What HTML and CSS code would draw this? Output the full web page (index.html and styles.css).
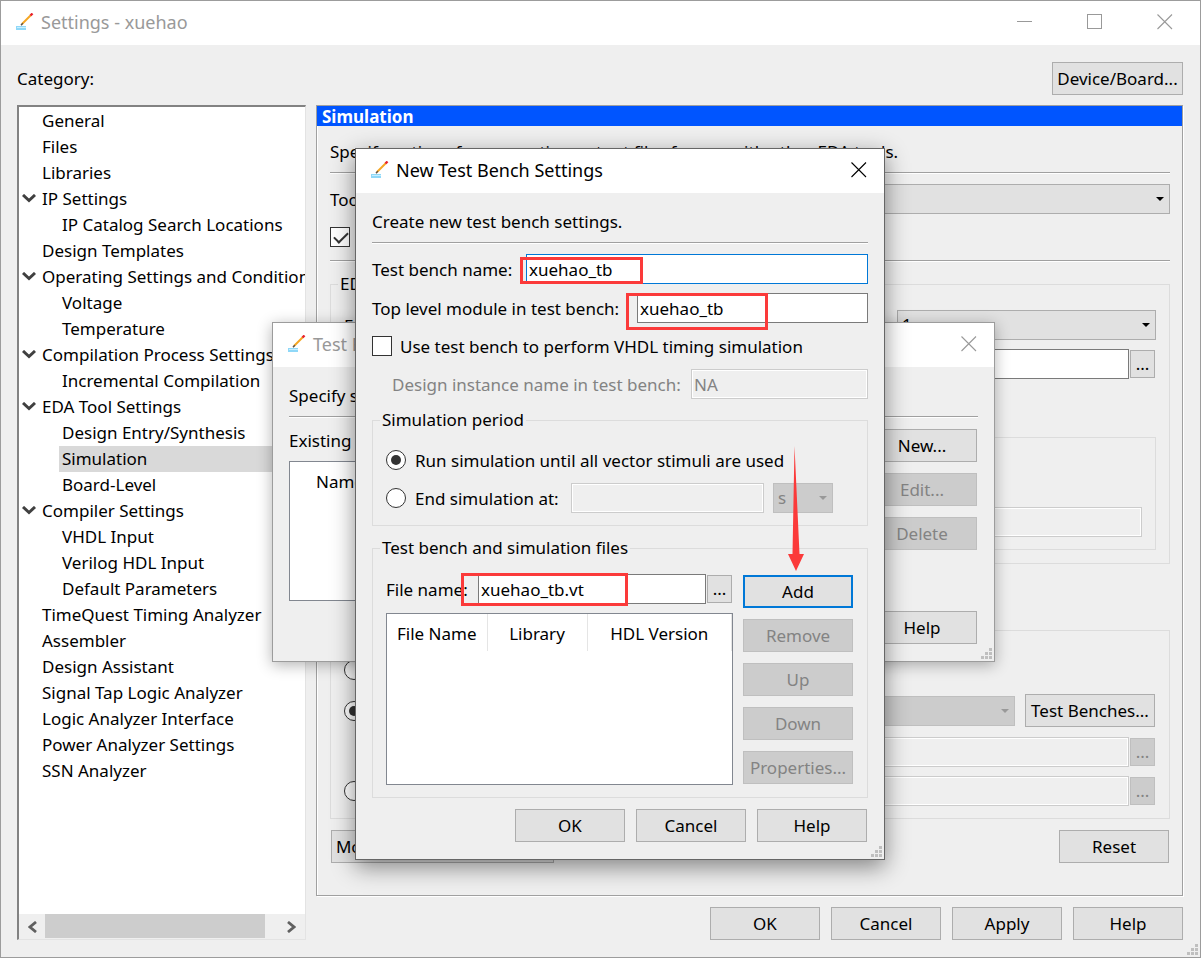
FILE: index.html
```html
<!DOCTYPE html>
<html lang="en">
<head>
  <meta charset="UTF-8" />
  <meta name="viewport" content="width=device-width, initial-scale=1.0"/>
  <title>Settings - xuehao</title>
  <link rel="stylesheet" href="styles.css">
</head>
<body>
  <!-- shared icons -->
  <svg class="icon-defs" aria-hidden="true">
    <symbol id="icon-app" viewBox="0 0 18 18">
      <rect x="0" y="13" width="10" height="4" fill="#8fd8f8"/>
      <rect x="1" y="14" width="9" height="1" fill="#c9efff"/>
      <path d="M6 11L15 2" stroke="#f5a623" stroke-width="2"/>
      <path d="M14.500 2.500L16.500 0.500" stroke="#e8222e" stroke-width="2.400"/>
      <path d="M5 12.200L6.800 10.200" stroke="#5a5248" stroke-width="1.500"/>
    </symbol>
    <symbol id="icon-close" viewBox="0 0 16 16">
      <path d="M0.500 0.500L15 15M15 0.500L0.500 15" stroke="currentColor" stroke-width="1.100" fill="none"/>
    </symbol>
    <symbol id="icon-grip" viewBox="0 0 11 11">
      <path d="M8 0h3v3h-3zM8 4h3v3h-3zM8 8h3v3h-3zM4 4h3v3h-3zM4 8h3v3h-3zM0 8h3v3h-3z" fill="#bfbfbf"/>
    </symbol>
    <symbol id="icon-chevron" viewBox="0 0 14 9">
      <path d="M1 1L7 6.500L13 1" stroke="#404040" stroke-width="3" fill="none"/>
    </symbol>
    <symbol id="icon-scroll" viewBox="0 0 9 12">
      <path d="M8 1L2 6L8 11" stroke="#606060" stroke-width="2.800" fill="none"/>
    </symbol>
  </svg>

  <div class="window main-window">
    <header class="titlebar">
      <svg class="app-icon"><use href="#icon-app"/></svg>
      <span class="title">Settings - xuehao</span>
      <button class="title-btn" aria-label="Minimize"><svg viewBox="0 0 16 16"><path d="M0 7.500H15" stroke="currentColor"/></svg></button>
      <button class="title-btn" aria-label="Maximize"><svg viewBox="0 0 16 16"><rect x="0.500" y="0.500" width="14" height="14" stroke="currentColor" fill="none"/></svg></button>
      <button class="title-btn" aria-label="Close"><svg><use href="#icon-close"/></svg></button>
    </header>

    <div class="top-row">
      <span>Category:</span>
      <button class="btn wide">Device/Board...</button>
    </div>

    <div class="settings">
      <div class="tree-box">
        <ul class="tree">
          <li><span>General</span></li>
          <li><span>Files</span></li>
          <li><span>Libraries</span></li>
          <li><svg class="chevron"><use href="#icon-chevron"/></svg><span>IP Settings</span>
            <ul>
              <li><span>IP Catalog Search Locations</span></li>
            </ul>
          </li>
          <li><span>Design Templates</span></li>
          <li><svg class="chevron"><use href="#icon-chevron"/></svg><span>Operating Settings and Conditions</span>
            <ul>
              <li><span>Voltage</span></li>
              <li><span>Temperature</span></li>
            </ul>
          </li>
          <li><svg class="chevron"><use href="#icon-chevron"/></svg><span>Compilation Process Settings</span>
            <ul>
              <li><span>Incremental Compilation</span></li>
            </ul>
          </li>
          <li><svg class="chevron"><use href="#icon-chevron"/></svg><span>EDA Tool Settings</span>
            <ul>
              <li><span>Design Entry/Synthesis</span></li>
              <li><span class="selected">Simulation</span></li>
              <li><span>Board-Level</span></li>
            </ul>
          </li>
          <li><svg class="chevron"><use href="#icon-chevron"/></svg><span>Compiler Settings</span>
            <ul>
              <li><span>VHDL Input</span></li>
              <li><span>Verilog HDL Input</span></li>
              <li><span>Default Parameters</span></li>
            </ul>
          </li>
          <li><span>TimeQuest Timing Analyzer</span></li>
          <li><span>Assembler</span></li>
          <li><span>Design Assistant</span></li>
          <li><span>Signal Tap Logic Analyzer</span></li>
          <li><span>Logic Analyzer Interface</span></li>
          <li><span>Power Analyzer Settings</span></li>
          <li><span>SSN Analyzer</span></li>
        </ul>
        <div class="scrollbar">
          <button aria-label="Scroll left"><svg><use href="#icon-scroll"/></svg></button>
          <div class="track"><div class="thumb"></div></div>
          <button class="flip" aria-label="Scroll right"><svg><use href="#icon-scroll"/></svg></button>
        </div>
      </div>

      <div class="page-col">
        <div class="panel">
          <h1>Simulation</h1>
          <div class="panel-body">
            <p>Specify options for generating output files for use with other EDA tools.</p>
            <hr>
            <div class="row tool-row">
              <label for="tool">Tool name:</label>
              <div class="combo"><select id="tool"><option></option></select></div>
            </div>
            <div class="check-row"><input type="checkbox" aria-label="Run simulation after compilation" checked></div>
            <hr class="low">
            <fieldset class="writer">
              <legend>EDA Netlist Writer settings</legend>
              <div class="row format-row">
                <label for="scale">Format:</label>
                <div class="combo"><select id="scale"><option>1 ps</option></select></div>
              </div>
              <div class="row path-row">
                <input type="text" aria-label="Output directory">
                <button class="btn browse">...</button>
              </div>
              <fieldset class="power">
                <input type="text" aria-label="Design instance name" disabled>
              </fieldset>
            </fieldset>
            <fieldset class="native">
              <div class="radio-row"><input type="radio" name="native" aria-label="None"></div>
              <div class="row compile-row">
                <div class="radio-row"><input type="radio" name="native" aria-label="Compile test bench" checked></div>
                <div class="combo disabled"><select disabled aria-label="Test bench"><option></option></select></div>
                <button class="btn">Test Benches...</button>
              </div>
              <div class="row path-row">
                <input type="text" aria-label="Simulation script" disabled>
                <button class="btn browse" disabled>...</button>
              </div>
              <div class="row path-row">
                <div class="radio-row"><input type="radio" name="native" aria-label="Script to compile test bench"></div>
                <input type="text" aria-label="Compile script" disabled>
                <button class="btn browse" disabled>...</button>
              </div>
            </fieldset>
            <div class="button-row split">
              <button class="btn more">More NativeLink Settings...</button>
              <button class="btn">Reset</button>
            </div>
          </div>
        </div>
        <div class="button-row">
          <button class="btn">OK</button>
          <button class="btn">Cancel</button>
          <button class="btn">Apply</button>
          <button class="btn">Help</button>
        </div>
      </div>
    </div>
    <svg class="grip"><use href="#icon-grip"/></svg>
  </div>

  <!-- Test Benches -->
  <div class="window dialog benches">
    <header class="titlebar">
      <svg class="app-icon"><use href="#icon-app"/></svg>
      <span class="title">Test Benches</span>
      <button class="title-btn" aria-label="Close"><svg><use href="#icon-close"/></svg></button>
    </header>
    <div class="dialog-body">
      <p>Specify settings for each test bench.</p>
      <hr>
      <div class="bench-list">
        <div class="list-col">
          <p>Existing test bench settings:</p>
          <div class="table-box">
            <table>
              <thead><tr><th>Name</th></tr></thead>
            </table>
          </div>
        </div>
        <div class="button-col">
          <button class="btn">New...</button>
          <button class="btn" disabled>Edit...</button>
          <button class="btn" disabled>Delete</button>
        </div>
      </div>
      <div class="button-row">
        <button class="btn">Help</button>
      </div>
    </div>
    <svg class="grip"><use href="#icon-grip"/></svg>
  </div>

  <!-- New Test Bench Settings -->
  <div class="window dialog new-bench">
    <header class="titlebar">
      <svg class="app-icon"><use href="#icon-app"/></svg>
      <span class="title">New Test Bench Settings</span>
      <button class="title-btn" aria-label="Close"><svg><use href="#icon-close"/></svg></button>
    </header>
    <div class="dialog-body">
      <p>Create new test bench settings.</p>
      <hr>
      <div class="row name-row">
        <label for="bench-name">Test bench name:</label>
        <input type="text" id="bench-name" class="active" value="xuehao_tb">
      </div>
      <div class="row module-row">
        <label for="module">Top level module in test bench:</label>
        <input type="text" id="module" value="xuehao_tb">
      </div>
      <label class="check-row"><input type="checkbox"> <span>Use test bench to perform VHDL timing simulation</span></label>
      <div class="row instance-row">
        <label for="bench-instance">Design instance name in test bench:</label>
        <input type="text" id="bench-instance" value="NA" disabled>
      </div>
      <fieldset class="period">
        <legend>Simulation period</legend>
        <label class="radio-row"><input type="radio" name="period" checked> <span>Run simulation until all vector stimuli are used</span></label>
        <div class="row end-row">
          <label class="radio-row"><input type="radio" name="period"> <span>End simulation at:</span></label>
          <input type="text" aria-label="End time" disabled>
          <div class="combo disabled"><select disabled aria-label="Time unit"><option>s</option></select></div>
        </div>
      </fieldset>
      <fieldset class="files">
        <legend>Test bench and simulation files</legend>
        <div class="file-col">
          <div class="row file-row">
            <label for="file">File name:</label>
            <input type="text" id="file" value="xuehao_tb.vt">
            <button class="btn browse">...</button>
          </div>
          <div class="table-box">
            <table>
              <thead><tr><th>File Name</th><th>Library</th><th>HDL Version</th></tr></thead>
            </table>
          </div>
        </div>
        <div class="button-col">
          <button class="btn default">Add</button>
          <button class="btn" disabled>Remove</button>
          <button class="btn" disabled>Up</button>
          <button class="btn" disabled>Down</button>
          <button class="btn" disabled>Properties...</button>
        </div>
      </fieldset>
      <div class="button-row">
        <button class="btn">OK</button>
        <button class="btn">Cancel</button>
        <button class="btn">Help</button>
      </div>
    </div>
    <svg class="grip"><use href="#icon-grip"/></svg>

    <!-- red marks over the fields to fill in -->
    <svg class="marks" viewBox="0 0 530 712">
      <g fill="none" stroke="#fb3a3a" stroke-width="3">
        <rect x="166.500" y="110.500" width="120" height="24"/>
        <rect x="272.500" y="146.500" width="139" height="34"/>
        <rect x="107.500" y="426.500" width="164" height="30"/>
      </g>
      <path d="M439.500 298L444.500 406H449L441 423L433 406H437.500Z" fill="#fb3a3a"/>
    </svg>
  </div>
</body>
</html>
```
FILE: styles.css
```css
* { box-sizing: border-box; }
body {
  margin: 0;
  position: relative;
  font-family: "Noto Sans", sans-serif;
  font-size: 17px;
  line-height: 22px;
  color: #000;
  background: #efefef;
}
p, h1, ul, fieldset, legend {
  margin: 0;
  padding: 0;
}
label, p, span, legend, th {
  white-space: nowrap;
}
input, select, button {
  font: inherit;
  color: inherit;
  margin: 0;
}
.icon-defs {
  position: absolute;
  width: 0;
  height: 0;
}

/* windows */
.window {
  display: flex;
  flex-direction: column;
  background: #efefef;
  border: 1px solid #9c9c9c;
}
.main-window {
  position: relative;
  min-height: 100vh;
}
.dialog {
  position: absolute;
}
.benches {
  left: 272px;
  top: 322px;
  width: 723px;
  box-shadow: 0 3px 14px rgba(0, 0, 0, 0.3);
}
.new-bench {
  left: 355px;
  top: 148px;
  width: 530px;
  border-color: #666;
  box-shadow: 0 7px 22px rgba(0, 0, 0, 0.45);
}
.titlebar {
  display: flex;
  align-items: center;
  height: 44px;
  padding: 0 9px 2px 15px;
  background: #fff;
  color: #999;
}
.new-bench .titlebar {
  color: #000;
}
.app-icon {
  width: 18px;
  height: 18px;
  margin-right: 7px;
}
.title {
  flex: 1;
  font-size: 18px;
}
.title-btn {
  width: 32px;
  height: 32px;
  margin-left: 38px;
  padding: 8px;
  border: none;
  background: none;
}
.title-btn svg {
  display: block;
  width: 16px;
  height: 16px;
}
.main-window .titlebar {
  padding-right: 19px;
}
.grip {
  position: absolute;
  right: 2px;
  bottom: 2px;
  width: 11px;
  height: 11px;
}

/* controls */
.btn {
  width: 110px;
  height: 33px;
  padding: 0;
  background: #e1e1e1;
  border: 1px solid #adadad;
  white-space: nowrap;
}
.btn.wide {
  width: 131px;
}
.btn.more {
  width: 223px;
}
.btn.browse {
  width: 25px;
  height: 28px;
}
.btn.default {
  border: 2px solid #0078d7;
}
.btn:disabled {
  background: #ccc;
  border-color: #bfbfbf;
  color: #838383;
}
input[type="text"] {
  width: 100%;
  min-width: 0;
  height: 30px;
  padding: 0 2px;
  background: #fff;
  border: 1px solid #7a7a7a;
  border-radius: 0;
}
input[type="text"].active {
  border-color: #0078d7;
}
input[type="text"]:disabled {
  background: #efefef;
  border-color: #ccc;
  color: #838383;
  box-shadow: inset 0 0 0 1px #fff;
}
input[type="checkbox"],
input[type="radio"] {
  appearance: none;
  flex: none;
  position: relative;
  width: 20px;
  height: 20px;
  background: #fff;
  border: 1px solid #333;
}
input[type="radio"] {
  border-radius: 50%;
}
input[type="radio"]:checked::after {
  content: "";
  position: absolute;
  inset: 4px;
  border-radius: 50%;
  background: #333;
}
input[type="checkbox"]:checked::after {
  content: "";
  position: absolute;
  left: 6px;
  top: 1px;
  width: 6px;
  height: 12px;
  border: solid #333;
  border-width: 0 2px 2px 0;
  transform: rotate(45deg);
}
.check-row, .radio-row {
  display: flex;
  align-items: center;
  gap: 8px;
  height: 20px;
}
.radio-row {
  gap: 9px;
}
.row > label:not(.radio-row),
.check-row span,
.radio-row span {
  padding-top: 2px;
}
.combo {
  position: relative;
}
.combo select {
  display: block;
  appearance: none;
  width: 100%;
  height: 30px;
  padding: 0 4px;
  background: #e1e1e1;
  border: 1px solid #adadad;
  border-radius: 0;
}
.combo::after {
  content: "";
  position: absolute;
  right: 6px;
  top: 13px;
  border: 4px solid transparent;
  border-top-color: #000;
  border-bottom: none;
}
.combo.disabled select {
  background: #ccc;
  border-color: #bfbfbf;
  color: #838383;
  opacity: 1;
}
.combo.disabled::after {
  border-top-color: #999;
}
hr {
  width: 100%;
  height: 2px;
  margin: 9px 0 10px;
  border: none;
  border-top: 1px solid #a0a0a0;
  background: #fff;
}
fieldset {
  min-width: 0;
  padding: 19px 13px 12px;
  border: 1px solid #dcdcdc;
}
legend {
  margin-left: -6px;
  padding: 0 2px;
}
.row {
  display: grid;
  align-items: center;
}
.button-row {
  display: flex;
  justify-content: flex-end;
  gap: 11px;
  margin-top: 11px;
}
.button-row.split {
  justify-content: space-between;
  padding: 0 1px;
}
.button-col {
  display: flex;
  flex-direction: column;
  gap: 11px;
}
.table-box {
  background: #fff;
  border: 1px solid #828790;
}
th {
  height: 37px;
  padding: 2px 0 0;
  font-weight: normal;
  border-right: 1px solid #e5e5e5;
}
table {
  width: 100%;
  border-collapse: collapse;
}

/* settings window */
.top-row {
  display: flex;
  justify-content: space-between;
  align-items: center;
  padding: 17px 17px 10px 16px;
}
.settings {
  flex: 1;
  display: grid;
  grid-template-columns: 289px 1fr;
  gap: 10px;
  padding: 0 17px 17px 16px;
}
.tree-box {
  display: flex;
  flex-direction: column;
  justify-content: space-between;
  overflow: hidden;
  background: #fff;
  border: 1px solid #e3e3e3;
  border-top: 2px solid #828282;
  border-left: 2px solid #828282;
}
.tree, .tree ul {
  list-style: none;
}
.tree {
  padding-top: 1px;
}
.tree li {
  position: relative;
  padding-left: 20px;
}
.tree span {
  display: block;
  height: 26px;
  padding-left: 3px;
  line-height: 26px;
}
.tree .selected {
  background: #d9d9d9;
}
.chevron {
  position: absolute;
  left: 3px;
  top: 8px;
  width: 14px;
  height: 9px;
}
.scrollbar {
  display: flex;
  height: 25px;
  background: #efefef;
}
.scrollbar button {
  width: 26px;
  padding: 0;
  border: none;
  background: none;
}
.scrollbar svg {
  display: block;
  width: 9px;
  height: 12px;
  margin: auto;
}
.scrollbar .flip {
  transform: scaleX(-1);
}
.track {
  flex: 1;
}
.thumb {
  width: 94%;
  height: 24px;
  background: #cdcdcd;
}
.page-col {
  display: flex;
  flex-direction: column;
}
.panel {
  flex: 1;
  display: flex;
  flex-direction: column;
  border: 1px solid #a0a0a0;
  box-shadow: 1px 1px 0 #fff, inset 1px 1px 0 #fff;
}
h1 {
  height: 20px;
  padding-left: 5px;
  background: #0055ff;
  color: #fff;
  font-size: 17px;
  line-height: 22px;
}
.panel-body {
  flex: 1;
  display: flex;
  flex-direction: column;
  padding: 15px 12px 32px 13px;
}
.tool-row {
  grid-template-columns: 130px 1fr;
  margin-bottom: 13px;
}
hr.low {
  margin: 13px 0 11px;
}
.writer {
  padding: 15px 13px 13px;
}
.format-row {
  grid-template-columns: 1fr 259px;
}
.path-row {
  display: flex;
  justify-content: flex-end;
  gap: 1px;
  margin: 9px 1px 0 0;
}
.path-row input[type="text"] {
  width: 480px;
}
.path-row .radio-row {
  flex: 1;
}
.power {
  margin-top: 58px;
  padding-top: 69px;
}
.native {
  margin-top: auto;
  padding-top: 29px;
}
.compile-row {
  grid-template-columns: 260px 1fr 130px;
  column-gap: 10px;
  margin: 14px 1px 10px 0;
}
.compile-row .btn {
  width: 100%;
}

/* dialogs */
.dialog-body {
  padding: 18px 16px 17px;
}
.dialog-body .button-row {
  padding-right: 1px;
}
.bench-list {
  display: grid;
  grid-template-columns: 1fr 110px;
  gap: 10px;
  padding: 1px 1px 0 0;
}
.benches .button-row {
  margin-top: 10px;
}
.list-col {
  padding-top: 1px;
}
.list-col .table-box {
  height: 140px;
  margin-top: 9px;
}
.list-col th {
  padding-left: 26px;
  text-align: left;
}
.name-row {
  grid-template-columns: 154px 1fr;
}
.module-row {
  grid-template-columns: 265px 1fr;
  margin: 9px 0 13px;
}
.instance-row {
  grid-template-columns: 299px 1fr;
  margin: 13px 0 10px;
  padding-left: 20px;
  color: #838383;
}
.end-row {
  grid-template-columns: 185px 193px 60px;
  margin-top: 13px;
}
.end-row .combo {
  margin-left: 9px;
  width: 60px;
}
.files {
  display: grid;
  grid-template-columns: 1fr 110px;
  gap: 10px;
  margin-top: 11px;
  padding: 15px 14px 12px 13px;
}
.file-row {
  grid-template-columns: 91px 1fr 25px;
  column-gap: 1px;
  padding-right: 1px;
}
.file-col .table-box {
  height: 172px;
  margin-top: 9px;
}
.file-col th:first-child,
.file-col th:nth-child(2) {
  width: 100px;
}
.files .button-col {
  padding-top: 1px;
}
.marks {
  position: absolute;
  left: -1px;
  top: -1px;
  width: 530px;
  height: 712px;
  pointer-events: none;
}
```
